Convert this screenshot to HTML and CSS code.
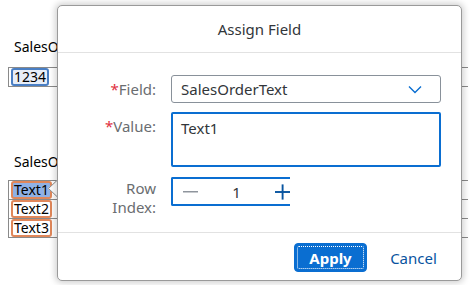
FILE: index.html
```html
<!DOCTYPE html>
<html>
<head>
<meta charset="utf-8">
<link rel="stylesheet" href="styles.css">
</head>
<body>
<div class="page">
  <div class="col-head first">SalesOrderText</div>
  <div class="row"><span class="token sel-blue">1234</span></div>
  <div class="col-head second">SalesOrderText</div>
  <div class="row"><span class="token orange active">Text1</span></div>
  <div class="row"><span class="token orange">Text2</span></div>
  <div class="row"><span class="token orange">Text3</span></div>
</div>

<svg class="pointer" width="11" height="20" viewBox="0 0 11 20">
  <polygon points="11,0 1,9.5 11,19" fill="#fff"/>
  <polyline points="11,0.5 1.5,9.5 11,18.5" fill="none" stroke="#8a8a8a" stroke-width="1"/>
</svg>

<div class="dialog">
  <div class="dlg-head">Assign Field</div>
  <div class="dlg-body">
    <div class="label"><span class="req">*</span>Field:</div>
    <div class="select">
      <span>SalesOrderText</span>
      <svg class="chev" width="14" height="9" viewBox="0 0 14 9"><polyline points="1,1.5 7,7.5 13,1.5" fill="none" stroke="#0a6ed1" stroke-width="1.4"/></svg>
    </div>
    <div class="label"><span class="req">*</span>Value:</div>
    <div class="textarea">Text1</div>
    <div class="label two">Row<br>Index:</div>
    <div class="stepper">
      <svg class="minus" width="16" height="2" viewBox="0 0 16 2"><rect width="16" height="1.5" fill="#8a9099"/></svg>
      <span class="num">1</span>
      <svg class="plus" width="16" height="16" viewBox="0 0 16 16"><rect x="0" y="7" width="16" height="2" fill="#0854a0"/><rect x="7" y="0" width="2" height="16" fill="#0854a0"/></svg>
    </div>
  </div>
  <div class="dlg-foot">
    <button class="btn apply"><span>Apply</span></button>
    <button class="btn cancel">Cancel</button>
  </div>
</div>
</body>
</html>
```

FILE: styles.css
```css
html, body {
  margin: 0;
  padding: 0;
  background: #fff;
}
body {
  width: 474px;
  height: 285px;
  overflow: hidden;
  position: relative;
  font-family: "Noto Sans", "Open Sans", sans-serif;
}
.page {
  padding: 0 6px 0 8px;
  font-size: 14px;
  color: #000;
}
.col-head {
  padding-left: 6px;
  height: 19px;
  line-height: 19px;
}
.col-head.first { margin-top: 37px; margin-bottom: 11px; }
.col-head.second { margin-top: 65px; margin-bottom: 9px; }
.row {
  height: 18px;
  border-top: 1px solid #8a8a8a;
  border-bottom: 1px solid #8a8a8a;
  border-left: 1px solid #8a8a8a;
  display: flex;
  align-items: center;
  padding-left: 2px;
}
.row + .row { border-top: none; }
.token {
  display: inline-block;
  line-height: 14px;
  padding: 0 1px;
  border-radius: 3px;
  font-size: 14px;
}
.sel-blue {
  border: 2px solid #4a7fc4;
  background: #e8eef8;
}
.orange {
  border: 2px solid #e0875a;
}
.orange.active {
  background: #8fb1e6;
}
.pointer {
  position: absolute;
  left: 47px;
  top: 179px;
}
.dialog {
  position: absolute;
  left: 57px;
  top: 5px;
  width: 403px;
  height: 274px;
  background: #fff;
  border: 1px solid #9a9a9a;
  border-radius: 5px;
  box-shadow: 0 0 6px 2px rgba(0, 0, 0, 0.18);
  display: flex;
  flex-direction: column;
  color: #32363a;
}
.dlg-head {
  height: 46px;
  border-bottom: 1px solid #e2e2e2;
  display: flex;
  align-items: center;
  justify-content: center;
  font-size: 15px;
}
.dlg-body {
  flex: 1;
  display: grid;
  grid-template-columns: 98px 270px;
  column-gap: 15px;
  row-gap: 9px;
  align-content: start;
  padding-top: 22px;
}
.label {
  text-align: right;
  color: #6a6d70;
  font-size: 15px;
  line-height: 28px;
}
.label.two {
  line-height: 19px;
  padding-top: 3px;
}
.req {
  color: #e03040;
}
.select {
  height: 26px;
  border: 1px solid #89919a;
  border-radius: 3px;
  display: flex;
  align-items: center;
  justify-content: space-between;
  padding: 0 18px 0 9px;
  font-size: 15px;
}
.chev { margin-top: 1px; }
.textarea {
  height: 47px;
  border: 2px solid #0a6ed1;
  border-radius: 2px;
  padding: 2px 8px;
  font-size: 15px;
  line-height: 24px;
}
.stepper {
  box-sizing: border-box;
  margin-top: 1px;
  width: 119px;
  height: 29px;
  border: 2px solid #0a6ed1;
  border-right: none;
  border-radius: 2px 0 0 2px;
  display: flex;
  align-items: center;
  padding-left: 10px;
}
.minus { margin-right: 34px; }
.num { font-size: 15px; width: 9px; }
.plus { margin-left: 34px; }
.dlg-foot {
  height: 47px;
  border-top: 1px solid #e2e2e2;
  display: flex;
  align-items: center;
  justify-content: flex-end;
  gap: 10px;
  padding: 0 11px;
}
.btn {
  font-family: inherit;
  font-size: 15px;
  height: 29px;
  width: 73px;
  border-radius: 4px;
  margin-top: 2px;
  padding: 0;
  cursor: pointer;
}
.apply {
  background: #0a6ed1;
  border: 1px solid #0a6ed1;
  color: #fff;
  font-weight: bold;
  padding: 2px;
}
.apply span {
  display: flex;
  align-items: center;
  justify-content: center;
  height: 100%;
  border: 1px dotted #fff;
  border-radius: 2px;
  box-sizing: border-box;
}
.cancel {
  background: transparent;
  border: 1px solid transparent;
  color: #0854a0;
}
```
